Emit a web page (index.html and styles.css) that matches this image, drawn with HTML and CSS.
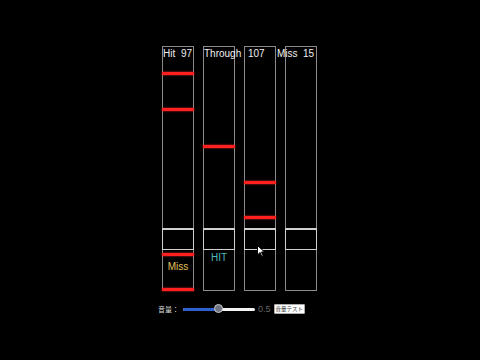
FILE: index.html
```html
<!DOCTYPE html>
<html lang="ja">
<head>
  <meta charset="UTF-8">
  <title>Lane Game</title>
  <link rel="stylesheet" href="styles.css">
</head>
<body>
  <div class="stage">
    <div class="lanes">
      <div class="lane">
        <div class="note" style="top:25px"></div>
        <div class="note" style="top:61px"></div>
        <div class="judge"></div>
        <div class="note" style="top:206px"></div>
        <div class="note" style="top:241px"></div>
        <div class="result miss">Miss</div>
      </div>
      <div class="lane">
        <div class="note" style="top:98px"></div>
        <div class="judge"></div>
        <div class="result hit">HIT</div>
      </div>
      <div class="lane">
        <div class="note" style="top:134px"></div>
        <div class="note" style="top:169px"></div>
        <div class="judge"></div>
      </div>
      <div class="lane">
        <div class="judge"></div>
      </div>
    </div>
    <div class="score">
      <span style="left:1px">Hit</span>
      <span style="left:19px">97</span>
      <span style="left:42px">Through</span>
      <span style="left:86px">107</span>
      <span style="left:115px">Miss</span>
      <span style="left:141px">15</span>
    </div>
    <svg class="cursor" width="8" height="12" viewBox="0 0 8 12">
      <path d="M0.5 0.5 L0.5 10 L3 7.5 L4.8 11.5 L6.2 10.8 L4.4 7 L7.5 7 Z" fill="#fff" stroke="#000" stroke-width="1"/>
    </svg>
  </div>

  <div class="controls">
    <span class="vol-label">音量：</span>
    <div class="slider">
      <div class="fill"></div>
      <div class="thumb"></div>
    </div>
    <span class="vol-value">0.5</span>
    <button class="test-btn">音量テスト</button>
  </div>
</body>
</html>
```

FILE: styles.css
```css
body { margin: 0; background: #000; font-family: "Liberation Sans", "Noto Sans CJK JP", sans-serif; }
.stage { position: relative; width: 155px; margin: 46px 0 0 162px; }
.lanes { display: flex; gap: 9px; }
.lane { position: relative; width: 30px; height: 243px; border: 1px solid #8a8a8a; }
.note { position: absolute; left: -1px; right: -1px; height: 3px; background: #ff2020; box-shadow: 0 0 2px #ff3030; }
.judge { position: absolute; left: -1px; right: -1px; top: 181px; height: 19px; border: 1px solid #d0d0d0; border-top-width: 2px; }
.result { position: absolute; left: 0; right: 0; text-align: center; font-size: 10px; }
.miss { top: 214px; color: #e6c25e; }
.hit { top: 205px; color: #52b8bc; }
.score { position: absolute; top: 2px; left: 0; font-size: 10px; color: #f0f0f0; }
.score span { position: absolute; white-space: nowrap; }
.cursor { position: absolute; left: 95px; top: 199px; }
.controls { display: flex; align-items: center; margin: 13px 0 0 158px; font-size: 7px; color: #ddd; white-space: nowrap; }
.controls > * { flex-shrink: 0; }
.vol-label { margin-right: 4px; }
.slider { position: relative; width: 72px; height: 3px; background: #f4f4f4; border-radius: 2px; }
.fill { width: 36px; height: 3px; background: #2f5fd0; border-radius: 2px; }
.thumb { position: absolute; left: 31px; top: -4px; width: 9px; height: 9px; border-radius: 50%; background: #6f7480; border: 1px solid #ccc; box-sizing: border-box; }
.vol-value { margin-left: 3px; color: #666; font-size: 9px; }
.test-btn { margin-left: 3px; padding: 0 1px; height: 10px; font-size: 5.5px; background: #fff; color: #333; border: 1px solid #aaa; border-radius: 1px; font-family: "Noto Sans CJK JP", sans-serif; line-height: 8px; }
```
